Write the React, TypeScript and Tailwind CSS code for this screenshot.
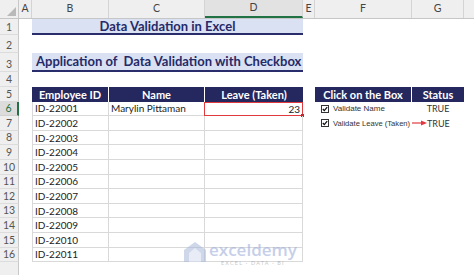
import React from 'react';

const ids = [
  'ID-22001', 'ID-22002', 'ID-22003', 'ID-22004', 'ID-22005', 'ID-22006',
  'ID-22007', 'ID-22008', 'ID-22009', 'ID-22010', 'ID-22011',
];

function RowHead({ n, active }: { n?: number; active?: boolean }) {
  return (
    <div
      className={
        'w-[19px] shrink-0 self-stretch flex items-end justify-center pb-[1px] border-r border-b text-[10.5px] leading-[12px] ' +
        (active
          ? 'bg-[#dcdcdc] border-r-[#217346] border-r-2 border-b-[#d0d0d0] text-[#217346]'
          : 'bg-[#efefef] border-r-[#c8c8c8] border-b-[#dcdcdc] text-[#555]')
      }
    >
      {n}
    </div>
  );
}

function CheckBox() {
  return (
    <div className="w-[8px] h-[8px] border border-[#333] bg-white flex items-center justify-center shrink-0">
      <svg width="6" height="6" viewBox="0 0 6 6">
        <path d="M0.8 3 L2.3 4.6 L5.2 1.2" stroke="#111" strokeWidth="1.3" fill="none" />
      </svg>
    </div>
  );
}

export default function App() {
  return (
    <div className="relative w-[474px] h-[275px] overflow-hidden bg-white font-['Lato',sans-serif] text-[#222]">
      {/* column headers */}
      <div className="flex h-[19px] bg-[#efefef] border-b border-[#c6c6c6] text-[10.5px] text-[#444]">
        <div className="w-[19px] shrink-0 border-r border-[#c8c8c8] relative">
          <svg className="absolute right-[2px] bottom-[2px]" width="9" height="9" viewBox="0 0 9 9">
            <polygon points="9,0 9,9 0,9" fill="#b9b9b9" />
          </svg>
        </div>
        <div className="w-[13px] shrink-0 border-r border-[#d4d4d4] flex items-center justify-center">A</div>
        <div className="w-[77px] shrink-0 border-r border-[#d4d4d4] flex items-center justify-center">B</div>
        <div className="w-[96px] shrink-0 border-r border-[#d4d4d4] flex items-center justify-center">C</div>
        <div className="w-[98px] shrink-0 border-r border-[#d4d4d4] flex items-center justify-center bg-[#e2e2e2] border-b-2 border-b-[#217346]">D</div>
        <div className="w-[12px] shrink-0 border-r border-[#d4d4d4] flex items-center justify-center">E</div>
        <div className="w-[97px] shrink-0 border-r border-[#d4d4d4] flex items-center justify-center">F</div>
        <div className="w-[52px] shrink-0 border-r border-[#d4d4d4] flex items-center justify-center">G</div>
        <div className="flex-1" />
      </div>

      {/* row 1 */}
      <div className="flex h-[16px]">
        <RowHead n={1} />
        <div className="w-[13px] shrink-0" />
        <div className="w-[271px] shrink-0 bg-[#d9e1f2] border-b-2 border-[#2a2d6b] flex items-center justify-center font-bold text-[13px] text-[#262a68] leading-none pt-[1px]">
          Data Validation in Excel
        </div>
      </div>

      {/* row 2 */}
      <div className="flex h-[18px]">
        <RowHead n={2} />
      </div>

      {/* row 3 */}
      <div className="flex h-[19px]">
        <RowHead n={3} />
        <div className="w-[13px] shrink-0" />
        <div className="w-[271px] shrink-0 bg-[#d9e1f2] border-b-2 border-[#2a2d6b] flex items-center pl-[4px] font-bold text-[13px] text-[#262a68] leading-none whitespace-pre">
          Application of  Data Validation with Checkbox
        </div>
      </div>

      {/* row 4 */}
      <div className="flex h-[15px]">
        <RowHead n={4} />
      </div>

      {/* row 5: table headers */}
      <div className="flex h-[14.6px]">
        <RowHead n={5} />
        <div className="w-[13px] shrink-0" />
        <div className="w-[271px] shrink-0 flex bg-[#25275f] text-white font-bold text-[11px] leading-none">
          <div className="w-[77px] border-r border-white flex items-center justify-center">Employee ID</div>
          <div className="w-[96px] border-r border-white flex items-center justify-center">Name</div>
          <div className="w-[98px] flex items-center justify-center">Leave (Taken)</div>
        </div>
        <div className="w-[12px] shrink-0" />
        <div className="w-[149px] shrink-0 flex bg-[#25275f] text-white font-bold text-[11px] leading-none">
          <div className="w-[97px] border-r border-white flex items-center justify-center">Click on the Box</div>
          <div className="w-[52px] flex items-center justify-center">Status</div>
        </div>
      </div>

      {/* rows 6-16 */}
      {ids.map((id, i) => (
        <div key={id} className="flex h-[14.6px]">
          <RowHead n={i + 6} active={i === 0} />
          <div className="w-[13px] shrink-0" />
          <div className="w-[77px] shrink-0 border-l border-b border-r border-[#d9d9d9] flex items-center pl-[2px] text-[10px] leading-none">
            {id}
          </div>
          <div className="w-[96px] shrink-0 border-b border-r border-[#d9d9d9] flex items-center pl-[2px] text-[10px] leading-none">
            {i === 0 ? 'Marylin Pittaman' : ''}
          </div>
          <div
            className={
              'shrink-0 flex items-center justify-end pr-[2px] text-[10px] leading-none relative ' +
              (i === 0 ? 'border border-[#e0393e] -ml-px w-[99px]' : 'w-[98px] border-b border-r border-[#d9d9d9]')
            }
          >
            {i === 0 ? '23' : ''}
            {i === 0 && <div className="absolute -right-[2px] -bottom-[2px] w-[3px] h-[3px] bg-[#c0262b]" />}
          </div>
          <div className="w-[12px] shrink-0" />
          {i === 0 && (
            <>
              <div className="w-[97px] shrink-0 flex items-center pl-[6px] gap-[4px] font-['Liberation_Sans',sans-serif] text-[8px] text-[#333] leading-none">
                <CheckBox />
                <span>Validate Name</span>
              </div>
              <div className="w-[52px] shrink-0 flex items-center justify-center text-[9px] text-[#333] leading-none">TRUE</div>
            </>
          )}
          {i === 1 && (
            <>
              <div className="w-[97px] shrink-0 flex items-center pl-[6px] gap-[4px] font-['Liberation_Sans',sans-serif] text-[7.6px] text-[#333] leading-none whitespace-nowrap">
                <CheckBox />
                <span>Validate Leave (Taken)</span>
              </div>
              <div className="w-[52px] shrink-0 flex items-center text-[9px] text-[#333] leading-none">
                <svg width="15" height="6" viewBox="0 0 15 6" className="shrink-0">
                  <line x1="0" y1="3" x2="10" y2="3" stroke="#e0393e" strokeWidth="1.2" />
                  <polygon points="9,0.5 15,3 9,5.5" fill="#e0393e" />
                </svg>
                <span>TRUE</span>
              </div>
            </>
          )}
        </div>
      ))}

      {/* row 17 */}
      <div className="flex h-[14px]">
        <RowHead />
      </div>

      {/* watermark */}
      <div className="absolute left-[184px] top-[240px] flex items-start gap-[3px] opacity-55 pointer-events-none">
        <svg width="22" height="20" viewBox="0 0 22 20" className="mt-[2px]">
          <polygon points="11,0 22,8 22,20 0,20 0,8" fill="#a9b7dc" />
          <polygon points="11,6 17,11 17,20 5,20 5,11" fill="#d5ddf0" />
        </svg>
        <div className="flex flex-col items-center">
          <span className="font-['Open_Sans',sans-serif] font-semibold text-[17px] leading-[20px] text-[#98a8d8]">exceldemy</span>
          <span className="text-[5.5px] tracking-[1.2px] text-[#9a9a9a] leading-[6px]">EXCEL · DATA · BI</span>
        </div>
      </div>
    </div>
  );
}
